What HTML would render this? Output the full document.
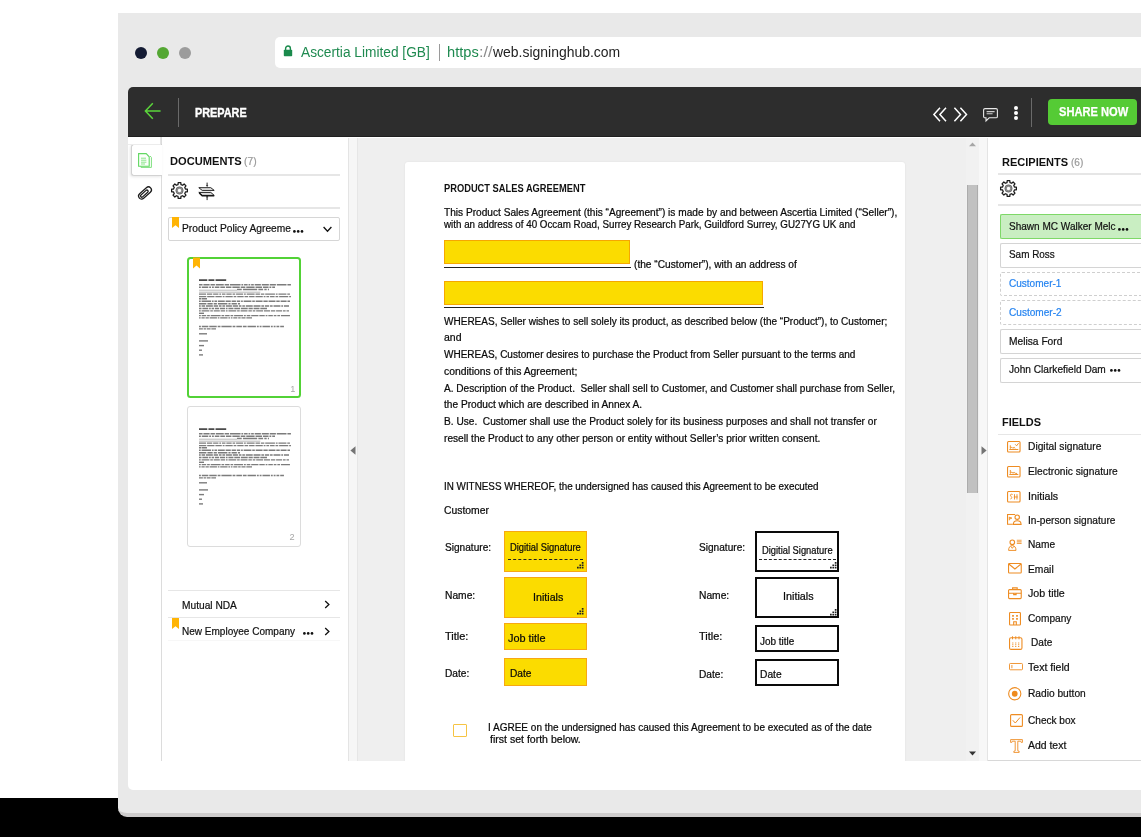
<!DOCTYPE html>
<html><head><meta charset="utf-8"><title>SigningHub</title>
<style>
*{box-sizing:border-box;margin:0;padding:0}
html,body{width:1141px;height:837px;overflow:hidden;background:#fff;font-family:"Liberation Sans",sans-serif;color:#111}
.abs{position:absolute}
.t{position:absolute;white-space:pre;line-height:1;transform-origin:0 50%;-webkit-text-stroke:.22px currentColor}
#root{position:absolute;left:0;top:0;width:1141px;height:837px;will-change:transform;overflow:hidden}
svg{position:absolute;overflow:visible}
</style></head><body><div id="root">
<div class="abs" style="left:0px;top:798px;width:1141px;height:39px;background:#000"></div>
<div class="abs" style="left:118px;top:13px;width:1030px;height:804px;background:#e9e9e9;border-bottom-left-radius:9px;border-bottom:4px solid #cecccc"></div>
<div class="abs" style="left:135px;top:47px;width:12px;height:12px;background:#141b33;border-radius:50%"></div>
<div class="abs" style="left:157px;top:47px;width:12px;height:12px;background:#54a733;border-radius:50%"></div>
<div class="abs" style="left:179px;top:47px;width:12px;height:12px;background:#9c9c9c;border-radius:50%"></div>
<div class="abs" style="left:275px;top:37px;width:880px;height:31px;background:#fff;border-radius:5px"></div>
<svg style="left:283.3px;top:45.4px" width="10" height="12" viewBox="0 0 10 12"><path d="M2.6 5V3.4a2.4 2.4 0 0 1 4.8 0V5" fill="none" stroke="#1a8a4c" stroke-width="1.4"/><rect x="0.8" y="4.8" width="8.4" height="6.4" rx="0.8" fill="#1a8a4c"/></svg>
<div class="abs" style="left:439px;top:44px;width:1px;height:17px;background:#9a9a9a"></div>
<div class="abs" style="left:128px;top:87px;width:1020px;height:703px;background:#fff;border-radius:5px 0 0 5px"></div>
<div class="abs" style="left:128px;top:87px;width:1020px;height:49.5px;background:#2d2d2d;border-radius:5px 0 0 0;border-bottom:1.5px solid #1f1f1f"></div>
<svg style="left:144px;top:102.300px" width="18" height="18" viewBox="0 0 18 18"><path d="M16.6 9H1.6M8.8 1.2L1.4 9l7.4 7.8" fill="none" stroke="#5bd53b" stroke-width="1.5"/></svg>
<div class="abs" style="left:178px;top:98px;width:1px;height:29px;background:#6a6a6a"></div>
<svg style="left:933px;top:107px" width="34" height="15" viewBox="0 0 34 15"><path d="M7 .7L.9 7.5 7 14.3M13 .7L6.9 7.5 13 14.3M21.4 .7l6.1 6.8-6.1 6.8M27.4 .7l6.1 6.8-6.1 6.8" fill="none" stroke="#fff" stroke-width="1.5"/></svg>
<svg style="left:983px;top:107.5px" width="15" height="14" viewBox="0 0 15 14"><path d="M2 .6h11a1.4 1.4 0 0 1 1.4 1.4v6.4A1.4 1.4 0 0 1 13 9.8H6.2L3 13V9.8H2A1.4 1.4 0 0 1 .6 8.400V2A1.4 1.4 0 0 1 2 .6z" fill="none" stroke="#e8e8e8" stroke-width="1.1"/><path d="M3.6 3.6h8M3.6 5.8h6" stroke="#cfcfcf" stroke-width="1.1"/></svg>
<div class="abs" style="left:1013.5px;top:106px;width:4px;height:4px;background:#fff;border-radius:50%"></div>
<div class="abs" style="left:1013.5px;top:111px;width:4px;height:4px;background:#fff;border-radius:50%"></div>
<div class="abs" style="left:1013.5px;top:116px;width:4px;height:4px;background:#fff;border-radius:50%"></div>
<div class="abs" style="left:1031px;top:98px;width:1px;height:29px;background:#6a6a6a"></div>
<div class="abs" style="left:1048.2px;top:98.5px;width:89px;height:26px;background:#55cb35;border-radius:4px"></div>
<div class="abs" style="left:128px;top:137px;width:220px;height:624px;background:#fff"></div>
<div class="abs" style="left:161px;top:137px;width:1px;height:624px;background:#dcdcdc"></div>
<div class="abs" style="left:347.5px;top:138px;width:10.4px;height:623px;background:#f6f6f6;border-left:1.200px solid #e4e4e4;border-right:1px solid #e6e6e6"></div>
<div class="abs" style="left:131px;top:144px;width:31px;height:31.5px;background:#fff;border:1px solid #d2d2d2;border-right:none;border-radius:3px 0 0 3px;box-shadow:-1px 1px 3px rgba(0,0,0,.10)"></div>
<div class="abs" style="left:128px;top:137px;width:33px;height:7.5px;background:#fff;border-right:1px solid #e4e4e4;border-bottom:1px solid #ececec"></div>
<svg style="left:138px;top:153px" width="14" height="15" viewBox="0 0 14 15"><path d="M3 13.2v1.2h10.4V4.4l-1.3-1.4" fill="none" stroke="#7fe07f" stroke-width="1"/><path d="M.6 .6h7.6l3 3.2v9.4H.6z" fill="#fbfffa" stroke="#62d862" stroke-width="1.1"/><path d="M3 5.2h5M3 7.2h5.4M3 9.2h5.4M3 11h4" stroke="#8be58b" stroke-width="1"/></svg>
<svg style="left:137px;top:185px" width="16" height="16" viewBox="0 0 16 16"><g transform="rotate(-42 8 8)" fill="none" stroke="#1c1c1c" stroke-width="1.25"><rect x="0.45" y="5" width="15.1" height="6" rx="3"/><path d="M14 8.000H4.800a1.500 1.500 0 0 1 0-3.000" stroke-width="0"/><rect x="2.4" y="6.75" width="9.4" height="2.5" rx="1.25"/></g></svg>
<div class="abs" style="left:168px;top:174px;width:172px;height:1.7px;background:#e6e6e6"></div>
<div class="abs" style="left:168px;top:207px;width:172px;height:1.7px;background:#e6e6e6"></div>
<svg style="left:171px;top:182px" width="17" height="17" viewBox="0 0 17 17"><path d="M7.03 2.58L7.19 0.61L9.81 0.61L9.97 2.58L11.65 3.27L13.15 1.99L15.01 3.85L13.73 5.35L14.42 7.03L16.39 7.19L16.39 9.81L14.42 9.97L13.73 11.65L15.01 13.15L13.15 15.01L11.65 13.73L9.97 14.42L9.81 16.39L7.19 16.39L7.03 14.42L5.35 13.73L3.85 15.01L1.99 13.15L3.27 11.65L2.58 9.97L0.61 9.81L0.61 7.19L2.58 7.03L3.27 5.35L1.99 3.85L3.85 1.99L5.35 3.27z" fill="none" stroke="#1a1a1a" stroke-width="1.25" stroke-linejoin="round"/><circle cx="8.5" cy="8.5" r="2.7" fill="none" stroke="#8a8a8a" stroke-width="2"/><circle cx="8.5" cy="8.5" r="3.7" fill="none" stroke="#444" stroke-width=".5"/></svg>
<svg style="left:198px;top:181.500px" width="18" height="18.500" viewBox="0 0 18 18.500"><path d="M9.100 .6v3.300M9.100 14.800v3.300" stroke="#222" stroke-width="1" fill="none"/><path d="M7.900 3.300h2.400L9.100 5zM7.900 15.300h2.400L9.100 13.600z" fill="#222"/><path d="M.8 5.700h12l3.400 2.700H4.200z" fill="#ececec" stroke="#161616" stroke-width=".95" stroke-linejoin="round"/><path d="M.8 10.400h12l3.400 3H4.200z" fill="#dedede" stroke="#161616" stroke-width=".95" stroke-linejoin="round"/><path d="M1.200 10.900l3 2.800h12" stroke="#161616" stroke-width="1.400" fill="none"/></svg>
<div class="abs" style="left:168px;top:217px;width:172px;height:24px;background:#fff;border:1px solid #d6d6d6;border-radius:2px"></div>
<svg style="left:172px;top:216.9px" width="7" height="11" viewBox="0 0 7 11"><path d="M0 0h7v11L3.500 8.200 0 11z" fill="#ffb405"/></svg>
<svg style="left:293.4px;top:230px" width="10.400" height="2.800" viewBox="0 0 10.400 2.800"><circle cx="1.400" cy="1.400" r="1.350" fill="#111"/><circle cx="5.200" cy="1.400" r="1.350" fill="#111"/><circle cx="9" cy="1.400" r="1.350" fill="#111"/></svg>
<svg style="left:322.500px;top:225.500px" width="9" height="7" viewBox="0 0 9 7"><path d="M.6 1l3.900 4.300L8.400 1" fill="none" stroke="#111" stroke-width="1.300"/></svg>
<div class="abs" style="left:187px;top:257px;width:114px;height:141px;background:#fff;border:2px solid #52d236;border-radius:3.500px"></div>
<svg style="left:193px;top:257px" width="7" height="11.800" viewBox="0 0 7 11"><path d="M0 0h7v11L3.500 8.200 0 11z" fill="#ffb405"/></svg>
<div class="abs" style="left:187.2px;top:406px;width:113.8px;height:141px;background:#fff;border:1px solid #dcdcdc;border-radius:3px"></div>
<svg style="left:199px;top:257px" width="100" height="140" viewBox="0 0 100 140" fill="none"><path d="M0 23.10H27.2" stroke="#4a4a4a" stroke-width="1.6" stroke-dasharray="8.28 1.18 5.91 1.18 10.64 1.18"/><path d="M0 27.80H92.0" stroke="#7c7c7c" stroke-width="1.4" stroke-dasharray="3.54 0.88 6.19 0.88 4.42 0.88 7.96 0.88 4.42 0.88 10.62 0.88 1.77 0.88 3.54 0.88 1.77 0.88 2.65 0.88 6.19 0.88 7.08 0.88 6.19 0.88 9.73 0.88 3.54 0.88"/><path d="M0 30.20H76.0" stroke="#7c7c7c" stroke-width="1.4" stroke-dasharray="1.85 0.93 6.49 0.93 1.85 0.93 1.85 0.93 4.63 0.93 4.63 0.93 5.56 0.93 7.41 0.93 4.63 0.93 8.34 0.93 6.49 0.93 5.56 0.93 1.85 0.93 2.78 0.93"/><path d="M0 33.20H38" stroke="#8a8a8a" stroke-width=".6"/><path d="M38 32.50H70.0" stroke="#7c7c7c" stroke-width="1.4" stroke-dasharray="4.75 1.19 14.24 1.19 4.75 1.19 2.37 1.19 8.31 1.19 2.37 1.19"/><path d="M0 35.20H61.3" stroke="#8a8a8a" stroke-width=".6"/><path d="M0 37.10H91.0" stroke="#7c7c7c" stroke-width="1.4" stroke-dasharray="7.07 0.88 5.30 0.88 5.30 0.88 1.77 0.88 3.53 0.88 5.30 0.88 2.65 0.88 7.07 0.88 1.77 0.88 7.95 0.88 4.42 0.88 3.53 0.88 9.72 0.88 1.77 0.88 7.95 0.88 2.65 0.88"/><path d="M0 39.60H92.0" stroke="#7c7c7c" stroke-width="1.4" stroke-dasharray="7.29 0.91 7.29 0.91 6.38 0.91 1.82 0.91 7.29 0.91 2.73 0.91 6.38 0.91 3.64 0.91 5.47 0.91 7.29 0.91 1.82 0.91 2.73 0.91 4.55 0.91 2.73 0.91 9.11 0.91 1.82 0.91"/><path d="M0 41.80H8.0" stroke="#7c7c7c" stroke-width="1.4" stroke-dasharray="2.13 0.53 5.33 0.53"/><path d="M0 44.20H91.0" stroke="#7c7c7c" stroke-width="1.4" stroke-dasharray="1.72 0.86 9.44 0.86 1.72 0.86 2.58 0.86 6.87 0.86 5.15 0.86 4.29 0.86 3.43 0.86 1.72 0.86 7.73 0.86 2.58 0.86 6.87 0.86 4.29 0.86 6.87 0.86 3.43 0.86 6.01 0.86 2.58 0.86"/><path d="M0 46.70H41.0" stroke="#7c7c7c" stroke-width="1.4" stroke-dasharray="7.36 1.05 5.26 1.05 3.15 1.05 9.46 1.05 2.10 1.05 5.26 1.05 2.10 1.05"/><path d="M0 49.00H90.0" stroke="#7c7c7c" stroke-width="1.4" stroke-dasharray="1.73 0.87 3.46 0.87 6.92 0.87 4.33 0.87 2.60 0.87 2.60 0.87 6.06 0.87 5.19 0.87 2.60 0.87 2.60 0.87 6.92 0.87 6.92 0.87 2.60 0.87 4.33 0.87 2.60 0.87 6.92 0.87 1.73 0.87 5.19 0.87"/><path d="M0 51.50H68.0" stroke="#7c7c7c" stroke-width="1.4" stroke-dasharray="2.52 0.84 5.88 0.84 1.68 0.84 2.52 0.84 4.20 0.84 5.04 0.84 1.68 0.84 5.04 0.84 5.88 0.84 6.72 0.84 4.20 0.84 5.88 0.84 6.72 0.84"/><path d="M0 53.90H90.0" stroke="#7c7c7c" stroke-width="1.4" stroke-dasharray="1.73 0.87 7.79 0.87 2.60 0.87 6.06 0.87 4.33 0.87 1.73 0.87 7.79 0.87 2.60 0.87 6.92 0.87 3.46 0.87 2.60 0.87 6.92 0.87 6.06 0.87 4.33 0.87 6.06 0.87 2.60 0.87 2.60 0.87"/><path d="M0 56.30H5.0" stroke="#7c7c7c" stroke-width="1.4" stroke-dasharray="5.00 0.62"/><path d="M0 58.60H91.0" stroke="#7c7c7c" stroke-width="1.4" stroke-dasharray="1.80 0.90 4.50 0.90 2.70 0.90 9.91 0.90 2.70 0.90 4.50 0.90 2.70 0.90 9.01 0.90 1.80 0.90 3.60 0.90 7.21 0.90 5.41 0.90 1.80 0.90 4.50 0.90 2.70 0.90 2.70 0.90 9.01 0.90"/><path d="M0 60.90H53.0" stroke="#7c7c7c" stroke-width="1.4" stroke-dasharray="1.63 0.82 3.26 0.82 3.26 0.82 7.34 0.82 1.63 0.82 7.34 0.82 1.63 0.82 1.63 0.82 4.08 0.82 2.45 0.82 4.08 0.82 5.71 0.82"/><path d="M0 69.50H85.0" stroke="#7c7c7c" stroke-width="1.4" stroke-dasharray="1.87 0.93 6.54 0.93 7.47 0.93 2.80 0.93 10.27 0.93 2.80 0.93 5.60 0.93 3.74 0.93 8.41 0.93 1.87 0.93 1.87 0.93 7.47 0.93 1.87 0.93 1.87 0.93 2.80 0.93 3.74 0.93"/><path d="M0 71.90H17.0" stroke="#7c7c7c" stroke-width="1.4" stroke-dasharray="3.86 0.77 2.32 0.77 3.86 0.77 4.64 0.77"/><path d="M0 76.80H8.0" stroke="#7c7c7c" stroke-width="1.4" stroke-dasharray="8.00 1.00"/><path d="M0 83.90H9.0" stroke="#7c7c7c" stroke-width="1.4" stroke-dasharray="9.00 0.90"/><path d="M0 88.60H5.0" stroke="#7c7c7c" stroke-width="1.4" stroke-dasharray="5.00 1.00"/><path d="M0 93.20H3.0" stroke="#7c7c7c" stroke-width="1.4" stroke-dasharray="3.00 0.50"/><path d="M0 97.90H4.0" stroke="#7c7c7c" stroke-width="1.4" stroke-dasharray="4.00 0.80"/></svg>
<svg style="left:199px;top:406.300px" width="100" height="140" viewBox="0 0 100 140" fill="none"><path d="M0 23.10H27.2" stroke="#4a4a4a" stroke-width="1.6" stroke-dasharray="8.28 1.18 5.91 1.18 10.64 1.18"/><path d="M0 27.80H92.0" stroke="#7c7c7c" stroke-width="1.4" stroke-dasharray="3.54 0.88 6.19 0.88 4.42 0.88 7.96 0.88 4.42 0.88 10.62 0.88 1.77 0.88 3.54 0.88 1.77 0.88 2.65 0.88 6.19 0.88 7.08 0.88 6.19 0.88 9.73 0.88 3.54 0.88"/><path d="M0 30.20H76.0" stroke="#7c7c7c" stroke-width="1.4" stroke-dasharray="1.85 0.93 6.49 0.93 1.85 0.93 1.85 0.93 4.63 0.93 4.63 0.93 5.56 0.93 7.41 0.93 4.63 0.93 8.34 0.93 6.49 0.93 5.56 0.93 1.85 0.93 2.78 0.93"/><path d="M0 33.20H38" stroke="#8a8a8a" stroke-width=".6"/><path d="M38 32.50H70.0" stroke="#7c7c7c" stroke-width="1.4" stroke-dasharray="4.75 1.19 14.24 1.19 4.75 1.19 2.37 1.19 8.31 1.19 2.37 1.19"/><path d="M0 35.20H61.3" stroke="#8a8a8a" stroke-width=".6"/><path d="M0 37.10H91.0" stroke="#7c7c7c" stroke-width="1.4" stroke-dasharray="7.07 0.88 5.30 0.88 5.30 0.88 1.77 0.88 3.53 0.88 5.30 0.88 2.65 0.88 7.07 0.88 1.77 0.88 7.95 0.88 4.42 0.88 3.53 0.88 9.72 0.88 1.77 0.88 7.95 0.88 2.65 0.88"/><path d="M0 39.60H92.0" stroke="#7c7c7c" stroke-width="1.4" stroke-dasharray="7.29 0.91 7.29 0.91 6.38 0.91 1.82 0.91 7.29 0.91 2.73 0.91 6.38 0.91 3.64 0.91 5.47 0.91 7.29 0.91 1.82 0.91 2.73 0.91 4.55 0.91 2.73 0.91 9.11 0.91 1.82 0.91"/><path d="M0 41.80H8.0" stroke="#7c7c7c" stroke-width="1.4" stroke-dasharray="2.13 0.53 5.33 0.53"/><path d="M0 44.20H91.0" stroke="#7c7c7c" stroke-width="1.4" stroke-dasharray="1.72 0.86 9.44 0.86 1.72 0.86 2.58 0.86 6.87 0.86 5.15 0.86 4.29 0.86 3.43 0.86 1.72 0.86 7.73 0.86 2.58 0.86 6.87 0.86 4.29 0.86 6.87 0.86 3.43 0.86 6.01 0.86 2.58 0.86"/><path d="M0 46.70H41.0" stroke="#7c7c7c" stroke-width="1.4" stroke-dasharray="7.36 1.05 5.26 1.05 3.15 1.05 9.46 1.05 2.10 1.05 5.26 1.05 2.10 1.05"/><path d="M0 49.00H90.0" stroke="#7c7c7c" stroke-width="1.4" stroke-dasharray="1.73 0.87 3.46 0.87 6.92 0.87 4.33 0.87 2.60 0.87 2.60 0.87 6.06 0.87 5.19 0.87 2.60 0.87 2.60 0.87 6.92 0.87 6.92 0.87 2.60 0.87 4.33 0.87 2.60 0.87 6.92 0.87 1.73 0.87 5.19 0.87"/><path d="M0 51.50H68.0" stroke="#7c7c7c" stroke-width="1.4" stroke-dasharray="2.52 0.84 5.88 0.84 1.68 0.84 2.52 0.84 4.20 0.84 5.04 0.84 1.68 0.84 5.04 0.84 5.88 0.84 6.72 0.84 4.20 0.84 5.88 0.84 6.72 0.84"/><path d="M0 53.90H90.0" stroke="#7c7c7c" stroke-width="1.4" stroke-dasharray="1.73 0.87 7.79 0.87 2.60 0.87 6.06 0.87 4.33 0.87 1.73 0.87 7.79 0.87 2.60 0.87 6.92 0.87 3.46 0.87 2.60 0.87 6.92 0.87 6.06 0.87 4.33 0.87 6.06 0.87 2.60 0.87 2.60 0.87"/><path d="M0 56.30H5.0" stroke="#7c7c7c" stroke-width="1.4" stroke-dasharray="5.00 0.62"/><path d="M0 58.60H91.0" stroke="#7c7c7c" stroke-width="1.4" stroke-dasharray="1.80 0.90 4.50 0.90 2.70 0.90 9.91 0.90 2.70 0.90 4.50 0.90 2.70 0.90 9.01 0.90 1.80 0.90 3.60 0.90 7.21 0.90 5.41 0.90 1.80 0.90 4.50 0.90 2.70 0.90 2.70 0.90 9.01 0.90"/><path d="M0 60.90H53.0" stroke="#7c7c7c" stroke-width="1.4" stroke-dasharray="1.63 0.82 3.26 0.82 3.26 0.82 7.34 0.82 1.63 0.82 7.34 0.82 1.63 0.82 1.63 0.82 4.08 0.82 2.45 0.82 4.08 0.82 5.71 0.82"/><path d="M0 69.50H85.0" stroke="#7c7c7c" stroke-width="1.4" stroke-dasharray="1.87 0.93 6.54 0.93 7.47 0.93 2.80 0.93 10.27 0.93 2.80 0.93 5.60 0.93 3.74 0.93 8.41 0.93 1.87 0.93 1.87 0.93 7.47 0.93 1.87 0.93 1.87 0.93 2.80 0.93 3.74 0.93"/><path d="M0 71.90H17.0" stroke="#7c7c7c" stroke-width="1.4" stroke-dasharray="3.86 0.77 2.32 0.77 3.86 0.77 4.64 0.77"/><path d="M0 76.80H8.0" stroke="#7c7c7c" stroke-width="1.4" stroke-dasharray="8.00 1.00"/><path d="M0 83.90H9.0" stroke="#7c7c7c" stroke-width="1.4" stroke-dasharray="9.00 0.90"/><path d="M0 88.60H5.0" stroke="#7c7c7c" stroke-width="1.4" stroke-dasharray="5.00 1.00"/><path d="M0 93.20H3.0" stroke="#7c7c7c" stroke-width="1.4" stroke-dasharray="3.00 0.50"/><path d="M0 97.90H4.0" stroke="#7c7c7c" stroke-width="1.4" stroke-dasharray="4.00 0.80"/></svg>
<svg style="left:349.500px;top:446px" width="6" height="9" viewBox="0 0 6 9"><path d="M5.500 .3v8.400L.4 4.500z" fill="#747474"/></svg>
<div class="abs" style="left:168px;top:589.8px;width:172px;height:1.7px;background:#e6e6e6"></div>
<svg style="left:323.500px;top:600px" width="7" height="9" viewBox="0 0 7 9"><path d="M1.200 1l3.700 3.500L1.200 8" fill="none" stroke="#111" stroke-width="1.300"/></svg>
<div class="abs" style="left:168px;top:616.6px;width:172px;height:1.7px;background:#e6e6e6"></div>
<svg style="left:172px;top:617.5px" width="7" height="11" viewBox="0 0 7 11"><path d="M0 0h7v11L3.500 8.200 0 11z" fill="#ffb405"/></svg>
<svg style="left:303px;top:631.7px" width="10.400" height="2.800" viewBox="0 0 10.400 2.800"><circle cx="1.400" cy="1.400" r="1.350" fill="#111"/><circle cx="5.200" cy="1.400" r="1.350" fill="#111"/><circle cx="9" cy="1.400" r="1.350" fill="#111"/></svg>
<svg style="left:323.500px;top:626.500px" width="7" height="9" viewBox="0 0 7 9"><path d="M1.200 1l3.700 3.500L1.200 8" fill="none" stroke="#111" stroke-width="1.300"/></svg>
<div class="abs" style="left:168px;top:640px;width:172px;height:1px;background:#f7f7f7"></div>
<div class="abs" style="left:357.5px;top:138px;width:621.5px;height:623px;background:#efefef"></div>
<div class="abs" style="left:978.3px;top:138px;width:10.2px;height:623px;background:#f7f7f7;border-left:1px solid #e8e8e8;border-right:1.200px solid #e4e4e4"></div>
<div class="abs" style="left:405px;top:162px;width:500px;height:610px;background:#fff;border-radius:3px 3px 0 0;box-shadow:0 0 2px rgba(0,0,0,.08)"></div>
<div class="abs" style="left:340px;top:761px;width:648px;height:29px;background:#fff"></div>
<div class="abs" style="left:965.5px;top:138px;width:13.5px;height:623px;background:#f1f1f1"></div>
<div class="abs" style="left:966.5px;top:185px;width:11.2px;height:308px;background:#c1c1c1;border-left:1px solid #acacac;border-right:1px solid #acacac"></div>
<svg style="left:968.500px;top:141.800px" width="7" height="4.500" viewBox="0 0 7 4.500"><path d="M0 4.300L3.500 .5 7 4.300z" fill="#a6a6a6"/></svg>
<svg style="left:968.500px;top:751px" width="7" height="5" viewBox="0 0 7 5"><path d="M0 .5L3.500 4.500 7 .5z" fill="#333"/></svg>
<svg style="left:980.700px;top:446px" width="6" height="9" viewBox="0 0 6 9"><path d="M.5 .3v8.400L5.600 4.500z" fill="#747474"/></svg>
<div class="abs" style="left:444px;top:240.4px;width:185.9px;height:24px;background:#fbdc00;border:1.3px solid #f6a700"></div>
<div class="abs" style="left:444px;top:266.9px;width:187px;height:1.2px;background:#222"></div>
<div class="abs" style="left:444px;top:281.3px;width:319px;height:23.5px;background:#fbdc00;border:1.3px solid #f6a700"></div>
<div class="abs" style="left:444px;top:307.2px;width:319.5px;height:1.2px;background:#222"></div>
<div class="abs" style="left:503.8px;top:530.5px;width:83.7px;height:41px;background:#fbdc00;border:1.8px solid #f7a812"></div>
<div class="abs" style="left:503.8px;top:576.9px;width:83.7px;height:41px;background:#fbdc00;border:1.8px solid #f7a812"></div>
<div class="abs" style="left:503.8px;top:622.7px;width:83.7px;height:27.5px;background:#fbdc00;border:1.8px solid #f7a812"></div>
<div class="abs" style="left:503.8px;top:658px;width:83.7px;height:27.7px;background:#fbdc00;border:1.8px solid #f7a812"></div>
<div class="abs" style="left:508px;top:559px;width:74.5px;height:0px;border-top:1px dashed #222"></div>
<div class="abs" style="left:755.1px;top:530.5px;width:84px;height:41px;background:#fff;border:2px solid #0a0a0a"></div>
<div class="abs" style="left:755.1px;top:577.1px;width:84px;height:40.8px;background:#fff;border:2px solid #0a0a0a"></div>
<div class="abs" style="left:755.1px;top:624.6px;width:84px;height:27.1px;background:#fff;border:2px solid #0a0a0a"></div>
<div class="abs" style="left:755.1px;top:659.2px;width:84px;height:27.1px;background:#fff;border:2px solid #0a0a0a"></div>
<div class="abs" style="left:758.5px;top:559px;width:77.5px;height:0px;border-top:1px dashed #222"></div>
<svg style="left:577.3px;top:562px" width="6.500" height="6.500" viewBox="0 0 6.500 6.500"><path d="M4.800 0h1.700v1.700H4.800zM2.400 2.400h1.700v1.700H2.400zM4.800 2.400h1.700v1.700H4.800zM0 4.800h1.700v1.700H0zM2.400 4.800h1.700v1.700H2.400zM4.800 4.800h1.700v1.700H4.800z" fill="#222"/></svg>
<svg style="left:577.3px;top:608.2px" width="6.500" height="6.500" viewBox="0 0 6.500 6.500"><path d="M4.800 0h1.700v1.700H4.800zM2.400 2.400h1.700v1.700H2.400zM4.800 2.400h1.700v1.700H4.800zM0 4.800h1.700v1.700H0zM2.400 4.800h1.700v1.700H2.400zM4.800 4.800h1.700v1.700H4.800z" fill="#222"/></svg>
<svg style="left:829.5px;top:562.2px" width="6.500" height="6.500" viewBox="0 0 6.500 6.500"><path d="M4.800 0h1.700v1.700H4.800zM2.400 2.400h1.700v1.700H2.400zM4.800 2.400h1.700v1.700H4.800zM0 4.800h1.700v1.700H0zM2.400 4.800h1.700v1.700H2.400zM4.800 4.800h1.700v1.700H4.800z" fill="#222"/></svg>
<svg style="left:829.5px;top:608.5px" width="6.500" height="6.500" viewBox="0 0 6.500 6.500"><path d="M4.800 0h1.700v1.700H4.800zM2.400 2.400h1.700v1.700H2.400zM4.800 2.400h1.700v1.700H4.800zM0 4.800h1.700v1.700H0zM2.400 4.800h1.700v1.700H2.400zM4.800 4.800h1.700v1.700H4.800z" fill="#222"/></svg>
<div class="abs" style="left:453px;top:723.5px;width:14px;height:13.5px;background:#fff;border:1.500px solid #f6c443;border-radius:1px"></div>
<div class="abs" style="left:988px;top:137px;width:160px;height:624px;background:#fff;border-bottom:1px solid #d8d8d8"></div>
<div class="abs" style="left:998px;top:173.4px;width:150px;height:1.7px;background:#e6e6e6"></div>
<div class="abs" style="left:998px;top:204.2px;width:150px;height:1.7px;background:#e6e6e6"></div>
<svg style="left:1000.400px;top:179.900px" width="17" height="17" viewBox="0 0 17 17"><path d="M7.03 2.58L7.19 0.61L9.81 0.61L9.97 2.58L11.65 3.27L13.15 1.99L15.01 3.85L13.73 5.35L14.42 7.03L16.39 7.19L16.39 9.81L14.42 9.97L13.73 11.65L15.01 13.15L13.15 15.01L11.65 13.73L9.97 14.42L9.81 16.39L7.19 16.39L7.03 14.42L5.35 13.73L3.85 15.01L1.99 13.15L3.27 11.65L2.58 9.97L0.61 9.81L0.61 7.19L2.58 7.03L3.27 5.35L1.99 3.85L3.85 1.99L5.35 3.27z" fill="none" stroke="#1a1a1a" stroke-width="1.25" stroke-linejoin="round"/><circle cx="8.5" cy="8.5" r="2.7" fill="none" stroke="#8a8a8a" stroke-width="2"/><circle cx="8.5" cy="8.5" r="3.7" fill="none" stroke="#444" stroke-width=".5"/></svg>
<div class="abs" style="left:1000.3px;top:214.2px;width:150px;height:24.5px;background:#c9eec2;border:1px solid #7ed868;border-right:none;border-radius:2px 0 0 2px"></div>
<div class="abs" style="left:1000.3px;top:243.1px;width:150px;height:24.5px;background:#fff;border:1px solid #d4d4d4;border-right:none;border-radius:2px 0 0 2px"></div>
<div class="abs" style="left:1000.3px;top:271.6px;width:150px;height:24.5px;background:#fff;border:1px dashed #cfcfcf;border-right:none;border-radius:2px 0 0 2px"></div>
<div class="abs" style="left:1000.3px;top:300.3px;width:150px;height:24.5px;background:#fff;border:1px dashed #cfcfcf;border-right:none;border-radius:2px 0 0 2px"></div>
<div class="abs" style="left:1000.3px;top:329.2px;width:150px;height:24.5px;background:#fff;border:1px solid #d4d4d4;border-right:none;border-radius:2px 0 0 2px"></div>
<div class="abs" style="left:1000.3px;top:358px;width:150px;height:24.5px;background:#fff;border:1px solid #d4d4d4;border-right:none;border-radius:2px 0 0 2px"></div>
<svg style="left:1117.8px;top:227.5px" width="10.400" height="2.800" viewBox="0 0 10.400 2.800"><circle cx="1.400" cy="1.400" r="1.350" fill="#111"/><circle cx="5.200" cy="1.400" r="1.350" fill="#111"/><circle cx="9" cy="1.400" r="1.350" fill="#111"/></svg>
<svg style="left:1109.9px;top:369.2px" width="10.400" height="2.800" viewBox="0 0 10.400 2.800"><circle cx="1.400" cy="1.400" r="1.350" fill="#111"/><circle cx="5.200" cy="1.400" r="1.350" fill="#111"/><circle cx="9" cy="1.400" r="1.350" fill="#111"/></svg>
<div class="abs" style="left:998px;top:433.8px;width:150px;height:1.7px;background:#e6e6e6"></div>
<svg style="left:1007.1px;top:441.2px" width="13.6" height="11.6" viewBox="0 0 13.6 11.6" fill="none" stroke="#ee8c22" stroke-width="1.100"><rect x=".55" y=".55" width="12.500" height="10.500" rx="1"/><path d="M2.300 8.500h9M3.300 7.500V4.300M3.300 7.200l1.500-1 1 1 1.300-.8 1.200.9" stroke-width=".95"/><path d="M8.200 3.300l1.400 1.500 2-2.600" stroke-width=".95"/></svg>
<svg style="left:1007.1px;top:466px" width="13.6" height="11.6" viewBox="0 0 13.6 11.6" fill="none" stroke="#ee8c22" stroke-width="1.100"><rect x=".55" y=".55" width="12.500" height="10.500" rx="1"/><path d="M2.300 8.500h9M3.300 7.500V4M3.300 7.200l1.500-1.200 1 1.200 1.300-.8 1.200.9 1.800.2" stroke-width=".95"/></svg>
<svg style="left:1007.1px;top:490.5px" width="13.6" height="11.6" viewBox="0 0 13.6 11.6" fill="none" stroke="#ee8c22" stroke-width="1.100"><rect x=".55" y=".55" width="12.500" height="10.500" rx="1"/><path d="M5.600 3.500c-1.500-.8-2.800.2-1.800 1.500s1.800 2.300-.4 3M7.500 3.200v5.300M10 3.200v5.300M6.800 6h4" stroke-width=".9"/></svg>
<svg style="left:1007.1px;top:514.2px" width="14.5" height="11" viewBox="0 0 14.5 11" fill="none" stroke="#ee8c22" stroke-width="1.100"><path d="M5.800 10.300H.55V.55h7.600"/><path d="M2.300 3v3.300M2.300 3.200l2.600.9-2.600 1" stroke-width=".9"/><circle cx="10.200" cy="3.200" r="2.200"/><path d="M6.300 10.400c0-2.700 1.700-3.700 3.900-3.700s3.900 1 3.900 3.700z"/></svg>
<svg style="left:1007.6px;top:538.8px" width="14" height="12" viewBox="0 0 14 12" fill="none" stroke="#ee8c22" stroke-width="1.100"><circle cx="4.300" cy="3.300" r="2.300"/><path d="M.6 11.400c0-3.300 1.600-4.800 3.700-4.800s3.700 1.500 3.700 4.800zM2.800 7.300l1.500 2 1.500-2" stroke-width=".95"/><path d="M8.800 1.300h4.800M8.800 2.900h4.800M8.800 4.500h4.800" stroke-width="1.100" opacity=".8"/></svg>
<svg style="left:1008px;top:563.3px" width="13.8" height="10.6" viewBox="0 0 13.8 10.6" fill="none" stroke="#ee8c22" stroke-width="1.100"><rect x=".55" y=".55" width="12.700" height="9.500" rx=".8"/><path d="M.8 1l6.100 5L13 1"/></svg>
<svg style="left:1008px;top:586.8px" width="13.8" height="12.2" viewBox="0 0 13.8 12.2" fill="none" stroke="#ee8c22" stroke-width="1.100"><rect x=".55" y="2.600" width="12.700" height="9" rx="1"/><path d="M4.600 2.600V.9h4.600v1.700M.6 6.300h12.600M5.700 6.300v1.300h2.400V6.300"/></svg>
<svg style="left:1009.4px;top:611.6px" width="12" height="13.6" viewBox="0 0 12 13.6" fill="none" stroke="#ee8c22" stroke-width="1.100"><rect x=".55" y=".55" width="10.900" height="12.500" rx=".8"/><path d="M4 3v1.700M4 6v1.700M8 3v1.700M8 6v1.700" stroke-width="1.700"/><path d="M4.700 13v-3.200h2.600V13"/></svg>
<svg style="left:1008.5px;top:635.5px" width="13.5" height="14" viewBox="0 0 13.5 14" fill="none" stroke="#ee8c22" stroke-width="1.100"><rect x=".55" y="1.800" width="12.400" height="11.600" rx="1.500"/><path d="M3.500 .3v3M6.750 .3v3M10 .3v3" stroke-width="1"/><path d="M3.800 6.500v4.500M6.750 6.500v4.500M9.700 6.500v4.500" stroke-width="1.100" stroke-dasharray="1.100 .6"/></svg>
<svg style="left:1008.5px;top:662.7px" width="14" height="7.4" viewBox="0 0 14 7.4" fill="none" stroke="#ee8c22" stroke-width="1.100"><rect x=".5" y=".5" width="13" height="6.300" rx=".8" stroke-width=".9"/><path d="M2.900 2v3.300" stroke-width=".9"/></svg>
<svg style="left:1008.3px;top:686.7px" width="13.5" height="13.5" viewBox="0 0 13.5 13.5" fill="none" stroke="#ee8c22" stroke-width="1.100"><circle cx="6.750" cy="6.750" r="6.100"/><circle cx="6.750" cy="6.750" r="2.900" fill="#ee8a1d" stroke="none"/></svg>
<svg style="left:1009.7px;top:713.7px" width="13" height="13" viewBox="0 0 13 13" fill="none" stroke="#ee8c22" stroke-width="1.100"><rect x=".6" y=".6" width="11.800" height="11.800" rx="1"/><path d="M2.800 6.300l2.500 2.700 4.700-5.500" stroke-width="1"/></svg>
<svg style="left:1010px;top:738.8px" width="13" height="14" viewBox="0 0 13 14" fill="none" stroke="#ee8c22" stroke-width="1.100"><path d="M.6 .6h11.800v2.800h-1.200l-.5-1.200H7.800v9.600l1.400.5v1.100H3.800v-1.100l1.400-.5V2.200H2.300l-.5 1.200H.6z" stroke-width=".9" stroke-linejoin="round"/></svg>
<div class="t" style="left:300.8px;top:45.30px;font-size:14px;font-weight:400;color:#1f8a50;transform:scaleX(0.9795);-webkit-text-stroke:0">Ascertia Limited [GB]</div>
<div class="t" style="left:447.2px;top:45.30px;font-size:14px;font-weight:400;color:#1f8a50;transform:scaleX(1.0442);-webkit-text-stroke:0">https</div>
<div class="t" style="left:479.3px;top:45.30px;font-size:14px;font-weight:400;color:#8a8a8a;transform:scaleX(1.1652);-webkit-text-stroke:0">://</div>
<div class="t" style="left:492.8px;top:45.30px;font-size:14px;font-weight:400;color:#222;transform:scaleX(0.9965);-webkit-text-stroke:0">web.signinghub.com</div>
<div class="t" style="left:194.975px;top:107.12px;font-size:12.5px;font-weight:700;color:#fff;transform:scaleX(0.8678);-webkit-text-stroke:.4px #fff">PREPARE</div>
<div class="t" style="left:1058.875px;top:105.83px;font-size:12.5px;font-weight:700;color:#fff;transform:scaleX(0.8903);-webkit-text-stroke:.25px #fff">SHARE NOW</div>
<div class="t" style="left:170.025px;top:156.11px;font-size:11.5px;font-weight:700;color:#111;transform:scaleX(0.9666);-webkit-text-stroke:0;">DOCUMENTS</div>
<div class="t" style="left:244.25px;top:156.25px;font-size:11px;font-weight:400;color:#9a9a9a;transform:scaleX(0.9366);">(7)</div>
<div class="t" style="left:182.45px;top:223.15px;font-size:11px;font-weight:400;color:#111;transform:scaleX(0.9277);">Product Policy Agreeme</div>
<div class="t" style="left:290.3px;top:384.56px;font-size:9.2px;font-weight:400;color:#a6a6a6;-webkit-text-stroke:0">1</div>
<div class="t" style="left:289.6px;top:532.76px;font-size:9.2px;font-weight:400;color:#a6a6a6;-webkit-text-stroke:0">2</div>
<div class="t" style="left:182.45px;top:599.85px;font-size:11px;font-weight:400;color:#111;transform:scaleX(0.9258);">Mutual NDA</div>
<div class="t" style="left:182.45px;top:625.85px;font-size:11px;font-weight:400;color:#111;transform:scaleX(0.9112);">New Employee Company</div>
<div class="t" style="left:444.0px;top:184.00px;font-size:10px;font-weight:700;color:#111;transform:scaleX(0.9310);-webkit-text-stroke:0;">PRODUCT SALES AGREEMENT</div>
<div class="t" style="left:444.0px;top:208.00px;font-size:10px;font-weight:400;color:#0a0a0a;transform:scaleX(1.0131);">This Product Sales Agreement (this “Agreement”) is made by and between Ascertia Limited (“Seller”),</div>
<div class="t" style="left:444.0px;top:219.80px;font-size:10px;font-weight:400;color:#0a0a0a;transform:scaleX(0.9795);">with an address of 40 Occam Road, Surrey Research Park, Guildford Surrey, GU27YG UK and</div>
<div class="t" style="left:444.0px;top:316.90px;font-size:10px;font-weight:400;color:#0a0a0a;transform:scaleX(1.0021);">WHEREAS, Seller wishes to sell solely its product, as described below (the “Product”), to Customer;</div>
<div class="t" style="left:444.0px;top:333.30px;font-size:10px;font-weight:400;color:#0a0a0a;transform:scaleX(1.0487);">and</div>
<div class="t" style="left:444.0px;top:349.70px;font-size:10px;font-weight:400;color:#0a0a0a;transform:scaleX(1.0003);">WHEREAS, Customer desires to purchase the Product from Seller pursuant to the terms and</div>
<div class="t" style="left:444.0px;top:366.60px;font-size:10px;font-weight:400;color:#0a0a0a;transform:scaleX(1.0380);">conditions of this Agreement;</div>
<div class="t" style="left:444.0px;top:383.90px;font-size:10px;font-weight:400;color:#0a0a0a;transform:scaleX(1.0067);">A. Description of the Product.  Seller shall sell to Customer, and Customer shall purchase from Seller,</div>
<div class="t" style="left:444.0px;top:400.30px;font-size:10px;font-weight:400;color:#0a0a0a;transform:scaleX(1.0123);">the Product which are described in Annex A.</div>
<div class="t" style="left:444.0px;top:416.70px;font-size:10px;font-weight:400;color:#0a0a0a;transform:scaleX(1.0125);">B. Use.  Customer shall use the Product solely for its business purposes and shall not transfer or</div>
<div class="t" style="left:444.0px;top:433.60px;font-size:10px;font-weight:400;color:#0a0a0a;transform:scaleX(1.0145);">resell the Product to any other person or entity without Seller’s prior written consent.</div>
<div class="t" style="left:444.0px;top:482.40px;font-size:10px;font-weight:400;color:#0a0a0a;transform:scaleX(0.9850);">IN WITNESS WHEREOF, the undersigned has caused this Agreement to be executed</div>
<div class="t" style="left:444.0px;top:506.10px;font-size:10px;font-weight:400;color:#0a0a0a;transform:scaleX(1.0355);">Customer</div>
<div class="t" style="left:634.2px;top:259.50px;font-size:10px;font-weight:400;color:#0a0a0a;transform:scaleX(1.0171);">(the “Customer”), with an address of</div>
<div class="t" style="left:444.6px;top:542.50px;font-size:10px;font-weight:400;color:#0a0a0a;transform:scaleX(1.0111);">Signature:</div>
<div class="t" style="left:444.6px;top:590.90px;font-size:10px;font-weight:400;color:#0a0a0a;transform:scaleX(1.0254);">Name:</div>
<div class="t" style="left:444.6px;top:631.50px;font-size:10px;font-weight:400;color:#0a0a0a;transform:scaleX(1.0979);">Title:</div>
<div class="t" style="left:444.6px;top:669.40px;font-size:10px;font-weight:400;color:#0a0a0a;transform:scaleX(1.0165);">Date:</div>
<div class="t" style="left:699.0px;top:542.50px;font-size:10px;font-weight:400;color:#0a0a0a;transform:scaleX(1.0111);">Signature:</div>
<div class="t" style="left:699.0px;top:590.90px;font-size:10px;font-weight:400;color:#0a0a0a;transform:scaleX(1.0254);">Name:</div>
<div class="t" style="left:699.0px;top:631.50px;font-size:10px;font-weight:400;color:#0a0a0a;transform:scaleX(1.0979);">Title:</div>
<div class="t" style="left:699.0px;top:670.20px;font-size:10px;font-weight:400;color:#0a0a0a;transform:scaleX(1.0165);">Date:</div>
<div class="t" style="left:509.8px;top:543.00px;font-size:10px;font-weight:400;color:#0a0a0a;transform:scaleX(0.9351);">Digitial Signature</div>
<div class="t" style="left:532.5px;top:592.70px;font-size:10px;font-weight:400;color:#0a0a0a;transform:scaleX(1.0684);">Initials</div>
<div class="t" style="left:508.0px;top:634.10px;font-size:10px;font-weight:400;color:#0a0a0a;transform:scaleX(1.0879);">Job title</div>
<div class="t" style="left:509.8px;top:669.40px;font-size:10px;font-weight:400;color:#0a0a0a;transform:scaleX(1.0178);">Date</div>
<div class="t" style="left:761.5px;top:546.40px;font-size:10px;font-weight:400;color:#0a0a0a;transform:scaleX(0.9337);">Digitial Signature</div>
<div class="t" style="left:783.3px;top:591.80px;font-size:10px;font-weight:400;color:#0a0a0a;transform:scaleX(1.0790);">Initials</div>
<div class="t" style="left:759.5px;top:637.00px;font-size:10px;font-weight:400;color:#0a0a0a;transform:scaleX(0.9951);">Job title</div>
<div class="t" style="left:759.5px;top:670.20px;font-size:10px;font-weight:400;color:#0a0a0a;transform:scaleX(1.0225);">Date</div>
<div class="t" style="left:487.5px;top:722.50px;font-size:10px;font-weight:400;color:#0a0a0a;transform:scaleX(1.0005);">I AGREE on the undersigned has caused this Agreement to be executed as of the date</div>
<div class="t" style="left:489.7px;top:734.50px;font-size:10px;font-weight:400;color:#0a0a0a;transform:scaleX(1.0539);">first set forth below.</div>
<div class="t" style="left:1001.8249999999999px;top:157.41px;font-size:11.5px;font-weight:700;color:#111;transform:scaleX(0.9585);-webkit-text-stroke:0;">RECIPIENTS</div>
<div class="t" style="left:1071.15px;top:157.05px;font-size:11px;font-weight:400;color:#9a9a9a;transform:scaleX(0.9143);">(6)</div>
<div class="t" style="left:1008.75px;top:220.55px;font-size:11px;font-weight:400;color:#111;transform:scaleX(0.9115);">Shawn MC Walker Melc</div>
<div class="t" style="left:1008.75px;top:249.45px;font-size:11px;font-weight:400;color:#111;transform:scaleX(0.9025);">Sam Ross</div>
<div class="t" style="left:1008.75px;top:277.95px;font-size:11px;font-weight:400;color:#2684f0;transform:scaleX(0.9118);">Customer-1</div>
<div class="t" style="left:1008.75px;top:306.65px;font-size:11px;font-weight:400;color:#2684f0;transform:scaleX(0.9170);">Customer-2</div>
<div class="t" style="left:1008.75px;top:335.55px;font-size:11px;font-weight:400;color:#111;transform:scaleX(0.9292);">Melisa Ford</div>
<div class="t" style="left:1008.75px;top:364.35px;font-size:11px;font-weight:400;color:#111;transform:scaleX(0.9205);">John Clarkefield Dam</div>
<div class="t" style="left:1002.425px;top:417.31px;font-size:11.5px;font-weight:700;color:#111;transform:scaleX(0.9525);-webkit-text-stroke:0;">FIELDS</div>
<div class="t" style="left:1027.75px;top:441.40px;font-size:11px;font-weight:400;color:#111;transform:scaleX(0.9306);">Digital signature</div>
<div class="t" style="left:1027.75px;top:466.30px;font-size:11px;font-weight:400;color:#111;transform:scaleX(0.9295);">Electronic signature</div>
<div class="t" style="left:1027.75px;top:490.60px;font-size:11px;font-weight:400;color:#111;transform:scaleX(0.9683);">Initials</div>
<div class="t" style="left:1027.75px;top:515.20px;font-size:11px;font-weight:400;color:#111;transform:scaleX(0.9221);">In-person signature</div>
<div class="t" style="left:1027.75px;top:539.40px;font-size:11px;font-weight:400;color:#111;transform:scaleX(0.9235);">Name</div>
<div class="t" style="left:1027.75px;top:563.70px;font-size:11px;font-weight:400;color:#111;transform:scaleX(0.9340);">Email</div>
<div class="t" style="left:1027.75px;top:588.30px;font-size:11px;font-weight:400;color:#111;transform:scaleX(0.9704);">Job title</div>
<div class="t" style="left:1027.75px;top:612.90px;font-size:11px;font-weight:400;color:#111;transform:scaleX(0.9219);">Company</div>
<div class="t" style="left:1030.85px;top:637.20px;font-size:11px;font-weight:400;color:#111;transform:scaleX(0.9161);">Date</div>
<div class="t" style="left:1027.75px;top:661.80px;font-size:11px;font-weight:400;color:#111;transform:scaleX(0.9580);">Text field</div>
<div class="t" style="left:1027.55px;top:688.00px;font-size:11px;font-weight:400;color:#111;transform:scaleX(0.9264);">Radio button</div>
<div class="t" style="left:1027.55px;top:715.30px;font-size:11px;font-weight:400;color:#111;transform:scaleX(0.9157);">Check box</div>
<div class="t" style="left:1027.55px;top:740.00px;font-size:11px;font-weight:400;color:#111;transform:scaleX(0.9490);">Add text</div>
</div></body></html>
